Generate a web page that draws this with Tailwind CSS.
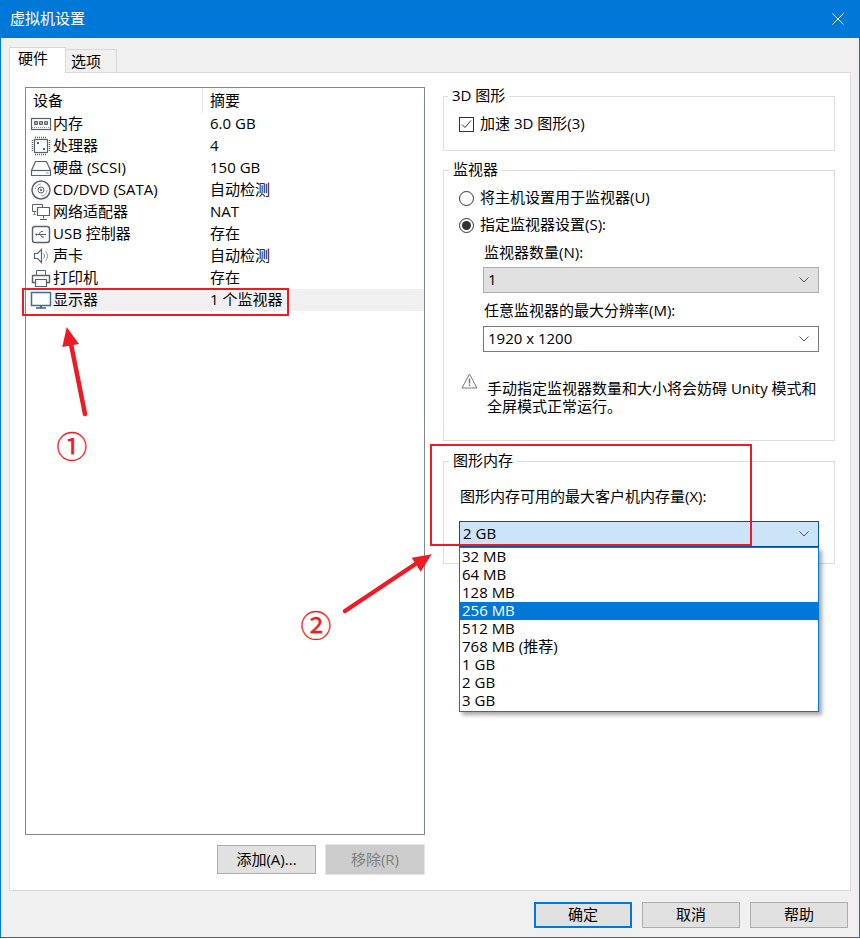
<!DOCTYPE html>
<html lang="zh-CN">
<head>
    <meta charset="UTF-8">
    <title>虚拟机设置</title>
    <script src="https://cdn.jsdelivr.net/npm/@tailwindcss/browser@4"></script>
</head>
<body class="bg-white font-['Open_Sans','Noto_Sans_CJK_SC',sans-serif] text-[15px] leading-[18px] text-black [&_span]:-translate-y-px">
<div class="relative w-[860px] h-[938px] flex flex-col bg-[#f0f0f0] border-x border-b border-[#0078d7] overflow-hidden">

    <!-- title bar -->
    <div class="h-[38px] shrink-0 -mx-px bg-[#0078d7] flex items-center justify-between pl-[10px] pr-[16px] text-white">
        <span>虚拟机设置</span>
        <svg width="12" height="12" viewBox="0 0 12 12" fill="none" stroke="white" stroke-width="1"><path d="M0.5 0.5L11.5 11.5M11.5 0.5L0.5 11.5"/></svg>
    </div>

    <!-- tabs -->
    <div class="flex items-end h-[34px] pl-[8px] shrink-0">
        <div class="relative z-10 w-[57px] h-[26px] -mb-px bg-white border border-b-0 border-[#d9d9d9] pl-[8px] pt-px">硬件</div>
        <div class="w-[51px] h-[23px] bg-[#f0f0f0] border border-l-0 border-b-0 border-[#d9d9d9] pl-[5px] pt-[2px]">选项</div>
    </div>

    <!-- panel -->
    <div class="mx-[8px] h-[819px] shrink-0 bg-white border border-[#d9d9d9] pl-[15px] pt-[14px] flex gap-[18px]">

        <!-- device list -->
        <div class="w-[400px] flex flex-col">
            <div class="h-[748px] border border-[#828790] flex flex-col">
                <div class="h-[25px] flex items-center shrink-0">
                    <div class="w-[177px] h-full pl-[7px] pt-[3px] border-r border-[#e5e5e5]">设备</div>
                    <div class="pl-[7px] pt-[3px] h-full">摘要</div>
                </div>
                <div class="h-[22px] flex items-center pl-[4px]">
                    <svg class="shrink-0" width="22" height="22" viewBox="0 0 22 22" fill="none" stroke="#56636d"><rect x="1.5" y="5.5" width="19" height="11" stroke-width="1.2"/><path d="M2 14.5H20" stroke="#8a949c" stroke-dasharray="1 1"/><path d="M4.5 8.5h3v3h-3zM9.5 8.5h3v3h-3zM14.5 8.5h3v3h-3z" fill="#a3acb3"/></svg>
                    <span class="w-[158px] pl-px">内存</span><span>6.0 GB</span>
                </div>
                <div class="h-[22px] flex items-center pl-[4px]">
                    <svg class="shrink-0" width="22" height="22" viewBox="0 0 22 22" fill="none" stroke="#56636d"><rect x="4.5" y="4.5" width="13" height="13" stroke-width="1.2"/><path d="M5 2.5H17M5 19.5H17M2.5 5V17M19.5 5V17" stroke-dasharray="1 1" stroke-width="1.5"/><rect x="7" y="7" width="2" height="2" fill="#56636d" stroke="none"/><rect x="13" y="13" width="2" height="2" fill="#56636d" stroke="none"/></svg>
                    <span class="w-[158px] pl-px">处理器</span><span>4</span>
                </div>
                <div class="h-[22px] flex items-center pl-[4px]">
                    <svg class="shrink-0" width="22" height="22" viewBox="0 0 22 22" fill="none" stroke="#56636d"><path d="M5.5 4.5H16.5L20.5 13.5V18.5H1.5V13.5Z" stroke-width="1.2"/><path d="M2 13.5H20" stroke-width="1.2"/><path d="M16 16H18.5" stroke="#8a949c"/></svg>
                    <span class="w-[158px] pl-px">硬盘 (SCSI)</span><span>150 GB</span>
                </div>
                <div class="h-[22px] flex items-center pl-[4px]">
                    <svg class="shrink-0" width="22" height="22" viewBox="0 0 22 22" fill="none" stroke="#56636d"><circle cx="11" cy="11" r="9" stroke-width="1.5"/><circle cx="11" cy="11" r="3"/><circle cx="11" cy="11" r="0.8" fill="#56636d"/><path d="M5 11a6 6 0 0 1 6-6M17 11a6 6 0 0 1-6 6" stroke="#a3acb3"/></svg>
                    <span class="w-[158px] pl-px">CD/DVD (SATA)</span><span>自动检测</span>
                </div>
                <div class="h-[22px] flex items-center pl-[4px]">
                    <svg class="shrink-0" width="22" height="22" viewBox="0 0 22 22" fill="none" stroke="#56636d"><path d="M2.5 3.5H12.5V6M2.5 3.5V10.5H6" /><path d="M7.5 6.5H19.5V14.5H7.5Z" stroke-width="1.2"/><path d="M13.5 14.5V17.5M10 18.5H17" /><path d="M3 13.5H6M4.5 11V13.5" stroke="#8a949c"/></svg>
                    <span class="w-[158px] pl-px">网络适配器</span><span>NAT</span>
                </div>
                <div class="h-[22px] flex items-center pl-[4px]">
                    <svg class="shrink-0" width="22" height="22" viewBox="0 0 22 22" fill="none" stroke="#56636d"><rect x="2.5" y="3.5" width="17" height="16" rx="2.5" stroke-width="1.4"/><path d="M6 11.5H16M8.5 11.5L11 8.5H13M10 11.5L12 14H14"/><path d="M5 11.5L7 10V13Z" fill="#56636d" stroke="none"/></svg>
                    <span class="w-[158px] pl-px">USB 控制器</span><span>存在</span>
                </div>
                <div class="h-[22px] flex items-center pl-[4px]">
                    <svg class="shrink-0" width="22" height="22" viewBox="0 0 22 22" fill="none" stroke="#56636d"><path d="M4.5 8.5H7.5L11.5 4.5V17.5L7.5 13.5H4.5Z" stroke-width="1.2"/><path d="M13.5 8.5a3.5 3.5 0 0 1 0 5M15.5 6.5a6 6 0 0 1 0 9" stroke="#8a949c"/></svg>
                    <span class="w-[158px] pl-px">声卡</span><span>自动检测</span>
                </div>
                <div class="h-[22px] flex items-center pl-[4px]">
                    <svg class="shrink-0" width="22" height="22" viewBox="0 0 22 22" fill="none" stroke="#56636d"><path d="M6.5 8V3.5H15.5V8"/><path d="M5.5 15.5H2.5V8.5H19.5V15.5H16.5" stroke-width="1.4"/><path d="M5.5 12.5H16.5V19.5H5.5Z" stroke-width="1.2"/></svg>
                    <span class="w-[158px] pl-px">打印机</span><span>存在</span>
                </div>
                <div class="h-[22px] flex items-center pl-[4px]">
                    <svg class="shrink-0" width="22" height="22" viewBox="0 0 22 22" fill="none" stroke="#3f6d8f"><rect x="1.5" y="3.5" width="19" height="13" stroke-width="1.5"/><path d="M6 19H16" stroke-width="1.6"/><path d="M11 17V19" stroke-width="2"/></svg>
                    <div class="flex-1 flex h-full items-center bg-[#f0f0f0]">
                        <span class="w-[158px] pl-px">显示器</span><span>1 个监视器</span>
                    </div>
                </div>
            </div>
            <div class="flex justify-end items-center gap-[9px] mt-[9px] h-[31px]">
                <div class="w-[99px] h-[29px] flex items-center justify-center bg-[#e1e1e1] border border-[#adadad]"><span>添加(A)...</span></div>
                <div class="w-[100px] h-[31px] flex items-center justify-center bg-[#cccccc] border border-[#e6e6e6] text-[#7f7f7f]"><span>移除(R)</span></div>
            </div>
        </div>

        <!-- settings -->
        <div class="w-[392px] pt-[9px] flex flex-col">
            <div class="relative h-[55px] border border-[#dcdcdc] pl-[15px] pt-[18px]">
                <span class="absolute left-[4px] -top-[10px] bg-white px-[4px]">3D 图形</span>
                <div class="flex items-center gap-[6px] h-[18px]">
                    <svg width="15" height="15" viewBox="0 0 15 15" fill="none"><rect x="0.5" y="0.5" width="14" height="14" stroke="#333"/><path d="M3 7.5L6 10.5L12 3.5" stroke="#333" stroke-width="1"/></svg>
                    <span>加速 3D 图形(3)</span>
                </div>
            </div>

            <div class="relative h-[271px] mt-[19px] border border-[#dcdcdc] pl-[15px] pt-[18px]">
                <span class="absolute left-[5px] -top-[10px] bg-white px-[4px]">监视器</span>
                <div class="flex items-center gap-[6px] h-[18px]">
                    <div class="w-[15px] h-[15px] rounded-full border border-[#333]"></div>
                    <span>将主机设置用于监视器(U)</span>
                </div>
                <div class="flex items-center gap-[6px] h-[18px] mt-[9px]">
                    <div class="w-[15px] h-[15px] rounded-full border border-[#333] flex items-center justify-center"><div class="w-[9px] h-[9px] rounded-full bg-[#333]"></div></div>
                    <span>指定监视器设置(S):</span>
                </div>
                <div class="h-[18px] mt-[10px] pl-[25px]"><span class="block">监视器数量(N):</span></div>
                <div class="w-[336px] h-[26px] mt-[5px] ml-[24px] bg-[#e1e1e1] border border-[#adadad] flex items-center justify-between pl-[4px] pr-[9px]">
                    <span>1</span>
                    <svg width="10" height="6" viewBox="0 0 10 6" fill="none" stroke="#555"><path d="M0.5 0.5L5 5L9.5 0.5"/></svg>
                </div>
                <div class="h-[18px] mt-[9px] pl-[25px]"><span class="block">任意监视器的最大分辨率(M):</span></div>
                <div class="w-[336px] h-[26px] mt-[6px] ml-[24px] bg-white border border-[#7a7a7a] flex items-center justify-between pl-[4px] pr-[9px]">
                    <span>1920 x 1200</span>
                    <svg width="10" height="6" viewBox="0 0 10 6" fill="none" stroke="#555"><path d="M0.5 0.5L5 5L9.5 0.5"/></svg>
                </div>
                <div class="flex mt-[28px] pl-[2px]">
                    <svg class="shrink-0 -mt-[7px]" width="17" height="16" viewBox="0 0 17 16" fill="none" stroke="#6f7b85"><path d="M8.5 1L16 15H1Z" stroke-linejoin="round"/><path d="M8.5 5.5V10.5M8.5 11.5V13" stroke-width="1.5"/></svg>
                    <span class="block ml-[9px] w-[340px]">手动指定监视器数量和大小将会妨碍 Unity 模式和全屏模式正常运行。</span>
                </div>
            </div>

            <div class="relative h-[103px] mt-[20px] border border-[#dcdcdc] pl-[15px] pt-[26px]">
                <span class="absolute left-[5px] -top-[10px] bg-white px-[4px]">图形内存</span>
                <div class="h-[18px] pl-px"><span class="block">图形内存可用的最大客户机内存量(X):</span></div>
                <div class="relative w-[360px] h-[26px] mt-[15px] bg-[#cce4f7] border border-[#005499] flex items-center justify-between pl-[3px] pr-[9px]">
                    <span>2 GB</span>
                    <svg width="10" height="6" viewBox="0 0 10 6" fill="none" stroke="#555"><path d="M0.5 0.5L5 5L9.5 0.5"/></svg>
                    <!-- open dropdown -->
                    <div class="absolute z-10 -left-px top-[25px] w-[360px] h-[165px] bg-white border border-[#0078d7] shadow-[3px_3px_4px_rgba(0,0,0,0.35)]">
                        <div class="h-[18px] pl-[2px]"><span class="block">32 MB</span></div>
                        <div class="h-[18px] pl-[2px]"><span class="block">64 MB</span></div>
                        <div class="h-[18px] pl-[2px]"><span class="block">128 MB</span></div>
                        <div class="h-[18px] pl-[2px] bg-[#0078d7] text-white"><span class="block">256 MB</span></div>
                        <div class="h-[18px] pl-[2px]"><span class="block">512 MB</span></div>
                        <div class="h-[18px] pl-[2px]"><span class="block">768 MB (推荐)</span></div>
                        <div class="h-[18px] pl-[2px]"><span class="block">1 GB</span></div>
                        <div class="h-[18px] pl-[2px]"><span class="block">2 GB</span></div>
                        <div class="h-[18px] pl-[2px]"><span class="block">3 GB</span></div>
                    </div>
                </div>
            </div>
        </div>
    </div>

    <!-- dialog buttons -->
    <div class="flex justify-end gap-[10px] pr-[11px] pt-[11px]">
        <div class="w-[98px] h-[26px] flex items-center justify-center bg-[#e1e1e1] border-2 border-[#0078d7]"><span>确定</span></div>
        <div class="w-[98px] h-[26px] flex items-center justify-center bg-[#e1e1e1] border border-[#adadad]"><span>取消</span></div>
        <div class="w-[98px] h-[26px] flex items-center justify-center bg-[#e1e1e1] border border-[#adadad]"><span>帮助</span></div>
    </div>

    <!-- red annotations drawn over the dialog -->
    <div class="absolute z-20 -left-px top-[288px] w-[267px] h-[28px] ml-[22px] border-2 border-[#ed1c24]"></div>
    <div class="absolute z-20 left-[429px] top-[444px] w-[322px] h-[102px] border-2 border-[#ed1c24]"></div>
    <svg class="absolute z-20 -left-px top-0 pointer-events-none" width="860" height="939" viewBox="0 0 860 939" fill="none">
        <path d="M85 414L71 344" stroke="#ed1c24" stroke-width="4.5" stroke-linecap="round"/>
        <path d="M66.7 327L62.3 347L79 344Z" fill="#ed1c24"/>
        <path d="M345 611L417 563" stroke="#ed1c24" stroke-width="4.5" stroke-linecap="round"/>
        <path d="M431.7 554.3L411.7 557.7L420.7 571.7Z" fill="#ed1c24"/>
    </svg>
    <span class="absolute z-20 left-[55px] top-[428px] w-[32px] text-center text-[31px] leading-[36px] text-[#ed1c24] [-webkit-text-stroke:0.3px_#ed1c24] font-['Noto_Sans_CJK_SC',sans-serif]">①</span>
    <span class="absolute z-20 left-[299px] top-[607px] w-[32px] text-center text-[31px] leading-[36px] text-[#ed1c24] [-webkit-text-stroke:0.3px_#ed1c24] font-['Noto_Sans_CJK_SC',sans-serif]">②</span>
</div>
</body>
</html>
